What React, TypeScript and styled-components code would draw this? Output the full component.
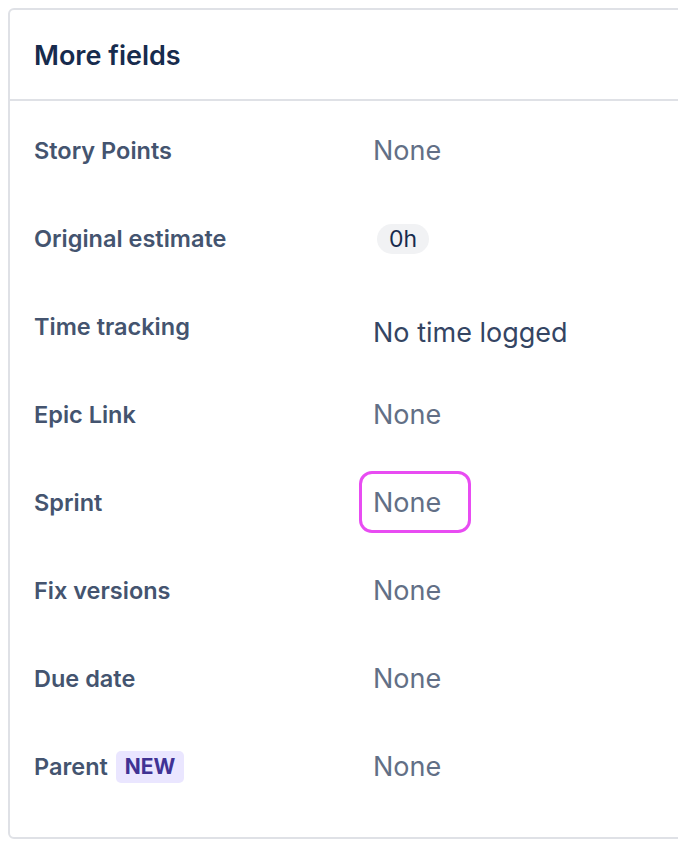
import styled, { createGlobalStyle } from "styled-components";

const GlobalStyle = createGlobalStyle`
  html, body {
    margin: 0;
    padding: 0;
    background: #ffffff;
    overflow: hidden;
  }
  body {
    font-family: Inter, "Noto Sans", "Liberation Sans", sans-serif;
  }
`;

type Field = {
  label: string;
  value: string;
  kind?: "chip" | "text" | "dark";
  isNew?: boolean;
  highlighted?: boolean;
};

const fields: Field[] = [
  { label: "Story Points", value: "None" },
  { label: "Original estimate", value: "0h", kind: "chip" },
  { label: "Time tracking", value: "No time logged", kind: "dark" },
  { label: "Epic Link", value: "None" },
  { label: "Sprint", value: "None", highlighted: true },
  { label: "Fix versions", value: "None" },
  { label: "Due date", value: "None" },
  { label: "Parent", value: "None", isNew: true },
];

const App = () => {
  return (
    <>
      <GlobalStyle />
      <Page>
        <Panel>
          <Header>
            <Title>More fields</Title>
          </Header>
          <FieldList>
            {fields.map((field) => (
              <Row key={field.label}>
                <Label>
                  {field.label}
                  {field.isNew && <NewLozenge>NEW</NewLozenge>}
                </Label>
                <ValueCell>
                  {field.kind === "chip" ? (
                    <Chip>{field.value}</Chip>
                  ) : (
                    <Value $dark={field.kind === "dark"} $highlighted={field.highlighted}>
                      {field.value}
                    </Value>
                  )}
                </ValueCell>
              </Row>
            ))}
          </FieldList>
        </Panel>
      </Page>
    </>
  );
};

//  --- Styling ---
const Page = styled.div`
  padding: 8px 0 0 8px;
  width: 670px;
  overflow: hidden;
`;

const Panel = styled.section`
  width: 700px;
  border: 2px solid #dfe1e6;
  border-radius: 6px;
  background: #ffffff;
  height: 831px;
  box-sizing: border-box;
`;

const Header = styled.header`
  height: 91px;
  display: flex;
  align-items: center;
  padding: 0 24px;
  border-bottom: 2px solid #dfe1e6;
  box-sizing: border-box;
`;

const Title = styled.h2`
  margin: 2px 0 0;
  font-size: 27px;
  font-weight: 600;
  color: #172b4d;
`;

const FieldList = styled.div`
  padding: 6px 0 0 24px;
  display: flex;
  flex-direction: column;
`;

const Row = styled.div`
  height: 88px;
  display: flex;
  align-items: center;
`;

const Label = styled.div`
  width: 339px;
  flex-shrink: 0;
  display: flex;
  align-items: center;
  gap: 8px;
  font-size: 23.5px;
  font-weight: 600;
  color: #44546f;
  margin-top: -1px;
`;

const NewLozenge = styled.span`
  display: inline-flex;
  align-items: center;
  height: 32px;
  padding: 0 9px;
  border-radius: 5px;
  background: #eae6ff;
  color: #403294;
  font-size: 21px;
  font-weight: 700;
`;

const ValueCell = styled.div`
  display: flex;
  align-items: center;
`;

const Value = styled.span<{ $dark?: boolean; $highlighted?: boolean }>`
  font-size: 27px;
  color: ${(p) => (p.$dark ? "#344563" : "#626f86")};
  margin-top: ${(p) => (p.$dark ? "10px" : "-1px")};
  ${(p) =>
    p.$highlighted &&
    `
    margin-left: -14px;
    margin-top: -3px;
    padding: 12px 27px 11px 11px;
    border: 3px solid #e84cf2;
    border-radius: 13px;
  `}
`;

const Chip = styled.span`
  display: inline-flex;
  align-items: center;
  height: 30px;
  margin-left: 4px;
  padding: 0 12px;
  border-radius: 15px;
  background: #f1f2f4;
  color: #172b4d;
  font-size: 23px;
`;

export default App;
